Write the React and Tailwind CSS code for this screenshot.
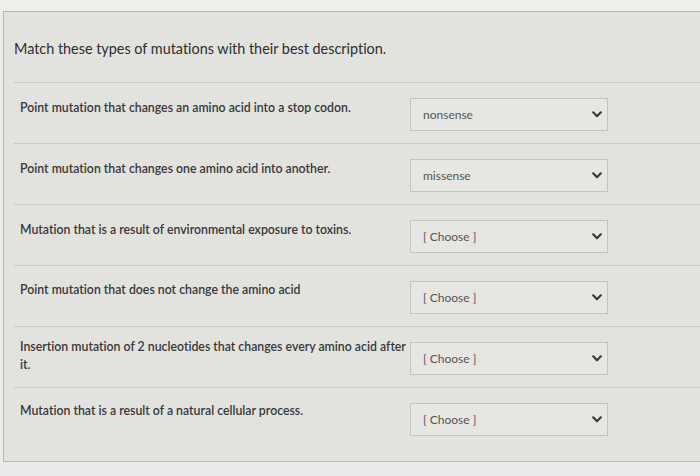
const rows = [
  { text: 'Point mutation that changes an amino acid into a stop codon.', value: 'nonsense', textTop: 'pt-[16px]' },
  { text: 'Point mutation that changes one amino acid into another.', value: 'missense', textTop: 'pt-[16px]' },
  { text: 'Mutation that is a result of environmental exposure to toxins.', value: '[ Choose ]', textTop: 'pt-[16px]' },
  { text: 'Point mutation that does not change the amino acid', value: '[ Choose ]', textTop: 'pt-[15px]' },
  { text: 'Insertion mutation of 2 nucleotides that changes every amino acid after it.', value: '[ Choose ]', textTop: 'pt-[11px]' },
  { text: 'Mutation that is a result of a natural cellular process.', value: '[ Choose ]', textTop: 'pt-[14px]' },
]

function Chevron() {
  return (
    <svg width="10" height="7" viewBox="0 0 10 7" className="shrink-0">
      <path d="M1.2 1.3 L5 5.2 L8.8 1.3" fill="none" stroke="#3a3a3a" strokeWidth="2.2" strokeLinecap="round" strokeLinejoin="round" />
    </svg>
  )
}

function Dropdown({ value }) {
  return (
    <div className="mt-[15px] flex h-[33px] w-[198px] shrink-0 items-center justify-between border border-[#c4c4c1] bg-[#e6e6e3] pl-[12px] pr-[5px]">
      <span className="text-[12px] text-[#555]">{value}</span>
      <Chevron />
    </div>
  )
}

export default function App() {
  return (
    <div className="h-[476px] w-[700px] overflow-hidden bg-[#ebebe9] font-['Lato',sans-serif] text-[#383838] [font-variant-ligatures:none]">
      <div className="h-[11px] bg-[#eeeeec]" />
      <div className="ml-[3px] h-[451px] border-y border-l border-[#b8b8b5] bg-[#e2e2df]">
        <h1 className="pl-[10px] pt-[28px] text-[14.4px] leading-[18px] text-[#2e2e2e]">
          Match these types of mutations with their best description.
        </h1>
        <div className="ml-[10px] mt-[24px]">
          {rows.map((r) => (
            <div key={r.text} className="flex h-[61px] border-t border-[#c8c8c5]">
              <p className={`w-[396px] shrink-0 pl-[6px] text-[12.3px] font-semibold leading-[18px] ${r.textTop}`}>{r.text}</p>
              <Dropdown value={r.value} />
            </div>
          ))}
        </div>
      </div>
    </div>
  )
}
